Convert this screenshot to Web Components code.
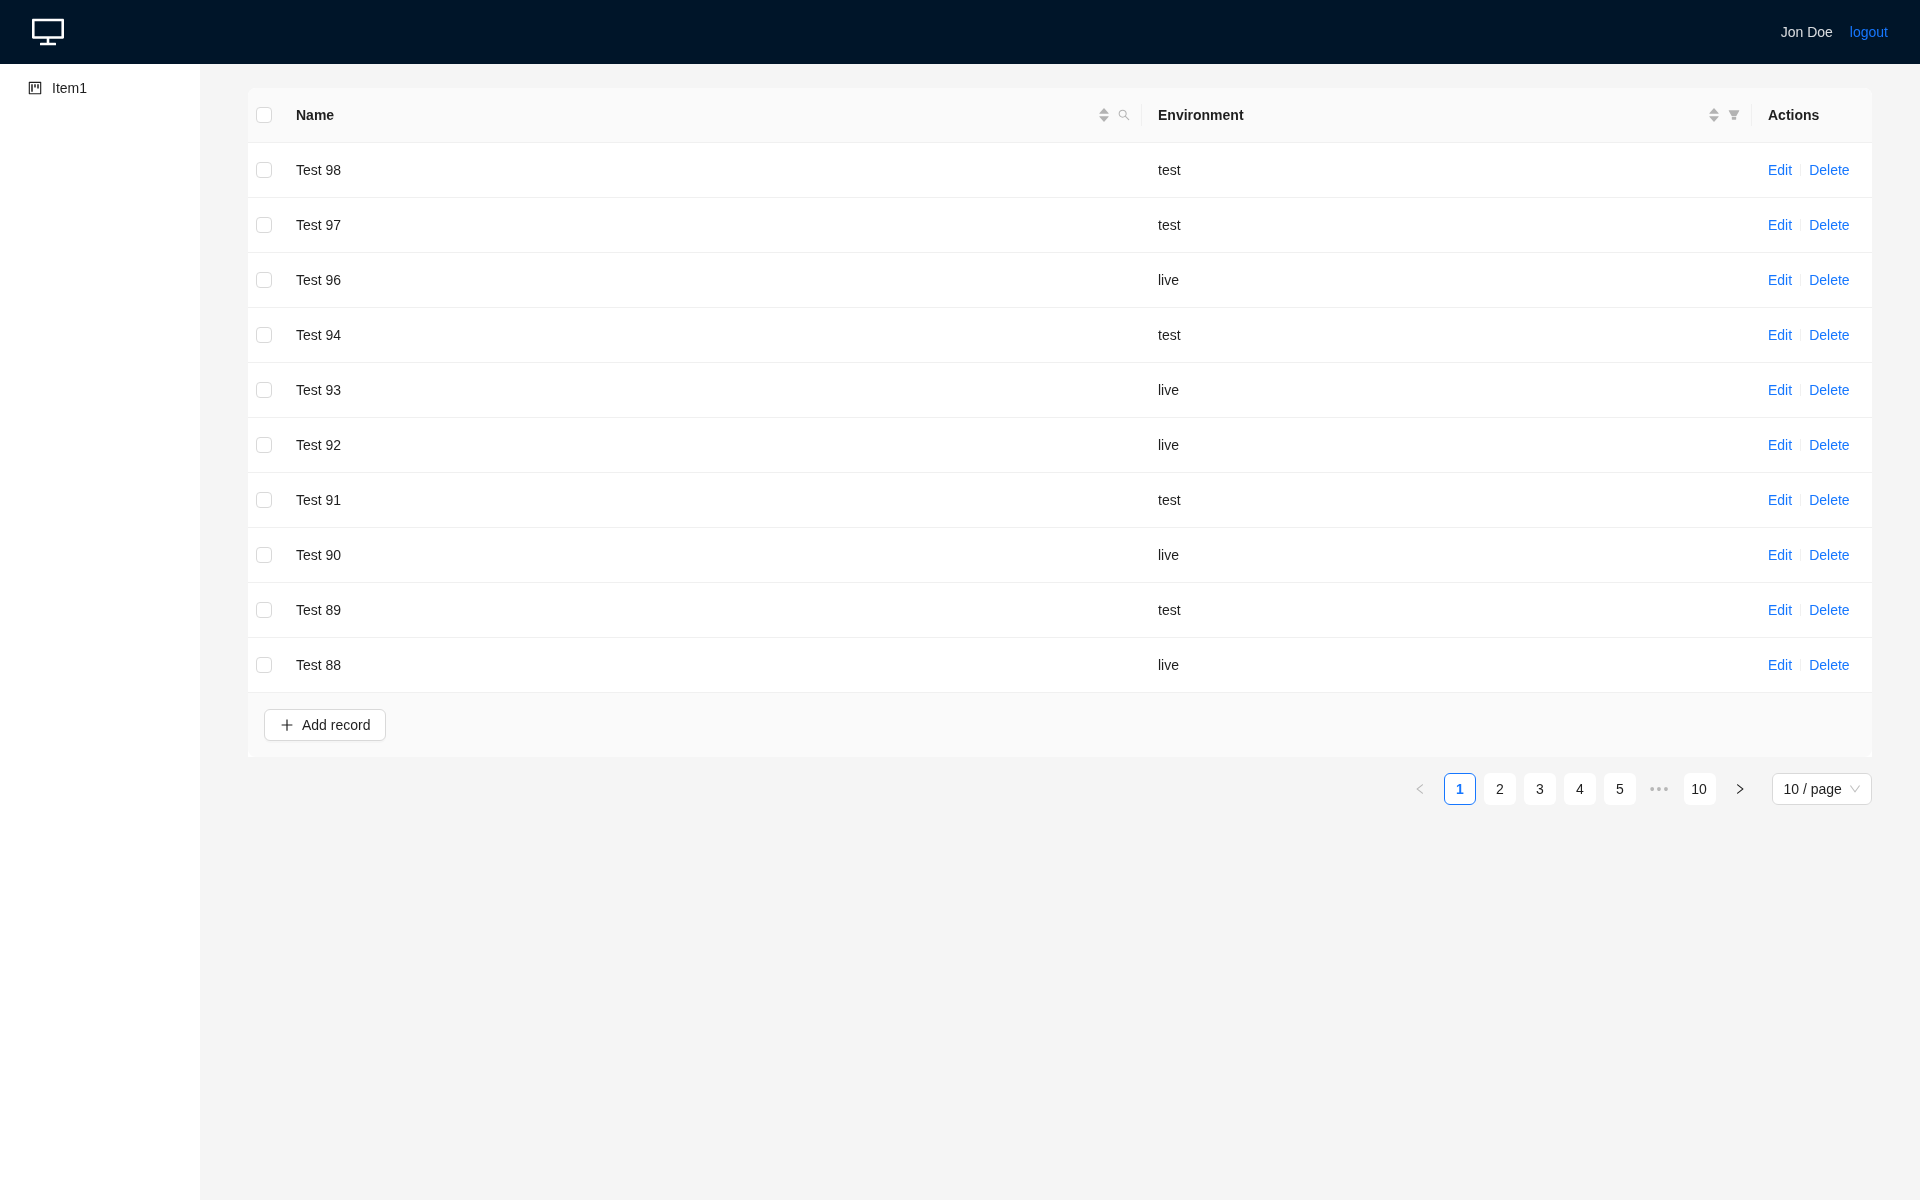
<!DOCTYPE html>
<html lang="en">
<head>
<meta charset="utf-8">
<title>Items</title>
<style>
  html, body { margin: 0; height: 100%; }
  body {
    font: 14px/22px "Liberation Sans", Arial, sans-serif;
    color: rgba(0,0,0,.88);
    background: #f5f5f5;
    --cols: 32px 862px 610px 120px;
    --link: #1677ff;
    --line: #f0f0f0;
  }
</style>
</head>
<body>
<app-shell>
  <app-header slot="header" user="Jon Doe"></app-header>
  <app-sider slot="sider"><side-item label="Item1"></side-item></app-sider>
  <data-table>
    <table-head></table-head>
    <table-row name="Test 98" env="test"></table-row>
    <table-row name="Test 97" env="test"></table-row>
    <table-row name="Test 96" env="live"></table-row>
    <table-row name="Test 94" env="test"></table-row>
    <table-row name="Test 93" env="live"></table-row>
    <table-row name="Test 92" env="live"></table-row>
    <table-row name="Test 91" env="test"></table-row>
    <table-row name="Test 90" env="live"></table-row>
    <table-row name="Test 89" env="test"></table-row>
    <table-row name="Test 88" env="live"></table-row>
    <add-button slot="footer">Add record</add-button>
  </data-table>
  <page-bar></page-bar>
</app-shell>

<script>
const ICONS = {
  desktop: 'M928 140H96c-17.7 0-32 14.3-32 32v496c0 17.7 14.3 32 32 32h380v112H304c-8.8 0-16 7.2-16 16v48c0 4.4 3.6 8 8 8h432c4.4 0 8-3.6 8-8v-48c0-8.8-7.2-16-16-16H548V700h380c17.7 0 32-14.3 32-32V172c0-17.7-14.3-32-32-32zm-40 488H136V212h752v416z',
  project: 'M280 752h80c4.4 0 8-3.6 8-8V280c0-4.4-3.6-8-8-8h-80c-4.4 0-8 3.6-8 8v464c0 4.4 3.6 8 8 8zm192-280h80c4.4 0 8-3.6 8-8V280c0-4.4-3.6-8-8-8h-80c-4.4 0-8 3.6-8 8v184c0 4.4 3.6 8 8 8zm192 72h80c4.4 0 8-3.6 8-8V280c0-4.4-3.6-8-8-8h-80c-4.4 0-8 3.6-8 8v256c0 4.4 3.6 8 8 8zm216-432H144c-17.7 0-32 14.3-32 32v736c0 17.7 14.3 32 32 32h736c17.7 0 32-14.3 32-32V144c0-17.7-14.3-32-32-32zm-40 728H184V184h656v656z',
  search: 'M909.6 854.5L649.9 594.8C690.2 542.7 712 479 712 412c0-80.2-31.3-155.4-87.9-212.1-56.6-56.7-132-87.9-212.1-87.9s-155.5 31.3-212.1 87.9C143.2 256.5 112 331.8 112 412c0 80.1 31.3 155.5 87.9 212.1C256.5 680.8 331.8 712 412 712c67 0 130.6-21.8 182.7-62l259.7 259.6a8.2 8.2 0 0 0 11.6 0l43.6-43.5a8.2 8.2 0 0 0 0-11.6zM570.4 570.4C528 612.7 471.8 636 412 636s-116-23.3-158.4-65.6C211.3 528 188 471.8 188 412s23.3-116.1 65.6-158.4C296 211.3 352.2 188 412 188s116.1 23.2 158.4 65.6S636 352.2 636 412s-23.3 116.1-65.6 158.4z',
  filter: 'M349 838c0 17.7 14.2 32 31.8 32h262.4c17.6 0 31.8-14.3 31.8-32V642H349v196zm531.1-684H143.9c-24.5 0-39.8 26.7-27.5 48l221.3 376h348.8l221.3-376c12.1-21.3-3.2-48-27.7-48z',
  up: 'M858.9 689L530.5 308.2c-9.4-10.9-27.5-10.9-37 0L165.1 689c-12.2 14.2-1.2 35 18.5 35h656.8c19.7 0 30.7-20.8 18.5-35z',
  down: 'M840.4 300H183.6c-19.7 0-30.7 20.8-18.5 35l328.4 380.8c9.4 10.9 27.5 10.9 37 0L858.9 335c12.2-14.2 1.2-35-18.5-35z',
  left: 'M724 218.3V141c0-6.7-7.7-10.4-12.9-6.3L260.3 486.8a31.86 31.86 0 0 0 0 50.3l450.8 352.1c5.3 4.1 12.9.4 12.9-6.3v-77.3c0-4.9-2.3-9.6-6.1-12.6l-360-281 360-281.1c3.8-3 6.1-7.7 6.1-12.6z',
  right: 'M765.7 486.8L314.9 134.7A7.97 7.97 0 0 0 302 141v77.3c0 4.9 2.3 9.6 6.1 12.6l360 281.1-360 281.1c-3.9 3-6.1 7.7-6.1 12.6V883c0 6.7 7.7 10.4 12.9 6.3l450.8-352.1a31.96 31.96 0 0 0 0-50.4z',
  chevron: 'M884 256h-75c-5.1 0-9.9 2.5-12.9 6.6L512 654.2 227.9 262.6c-3-4.1-7.8-6.6-12.9-6.6h-75c-6.5 0-10.3 7.4-6.5 12.7l352.6 486.1c12.8 17.6 39 17.6 51.7 0l352.6-486.1c3.9-5.3.1-12.7-6.4-12.7z',
  plus: 'M482 152h60q8 0 8 8v704q0 8-8 8h-60q-8 0-8-8V160q0-8 8-8zM176 474h672q8 0 8 8v60q0 8-8 8H176q-8 0-8-8v-60q0-8 8-8z'
};
const icon = (name, size) =>
  `<svg width="${size}" height="${size}" viewBox="64 64 896 896" fill="currentColor" aria-hidden="true" style="display:block;flex:none"><path d="${ICONS[name]}"/></svg>`;

class Base extends HTMLElement {
  render(html) {
    if (!this.shadowRoot) this.attachShadow({ mode: 'open' });
    this.shadowRoot.innerHTML = html;
  }
}

customElements.define('app-shell', class extends Base {
  connectedCallback() {
    this.render(`<style>
      :host { display: grid; grid-template: 64px 1fr / 200px 1fr; min-height: 1200px; will-change: transform; }
      .top { grid-column: 1 / -1; display: block; }
      main { padding: 24px 48px; display: flex; flex-direction: column; gap: 16px; min-width: 0; }
    </style>
    <slot class="top" name="header"></slot>
    <slot name="sider"></slot>
    <main><slot></slot></main>`);
  }
});

customElements.define('app-header', class extends Base {
  connectedCallback() {
    this.render(`<style>
      :host { display: flex; align-items: center; justify-content: space-between; height: 64px;
              padding: 0 32px; background: #001529; color: #fff; }
      .user { display: flex; gap: 17px; }
      .name { color: rgba(255,255,255,.85); }
      a { color: var(--link); text-decoration: none; }
    </style>
    ${icon('desktop', 32)}
    <div class="user"><span class="name">${this.getAttribute('user')}</span><a href="#">logout</a></div>`);
  }
});

customElements.define('app-sider', class extends Base {
  connectedCallback() {
    this.render(`<style>
      :host { display: block; background: #fff; padding: 4px 0; }
    </style><slot></slot>`);
  }
});

customElements.define('side-item', class extends Base {
  connectedCallback() {
    this.render(`<style>
      :host { display: flex; align-items: center; gap: 10px; height: 40px; padding-left: 28px; }
    </style>${icon('project', 14)}<span>${this.getAttribute('label')}</span>`);
  }
});

customElements.define('data-table', class extends Base {
  connectedCallback() {
    this.render(`<style>
      :host { display: block; background: #fff; border-radius: 8px 8px 0 0; overflow: hidden; }
      footer { background: #fafafa; padding: 16px; display: flex; border-radius: 0 0 8px 8px; }
    </style>
    <slot></slot>
    <footer><slot name="footer"></slot></footer>`);
  }
});

customElements.define('check-box', class extends Base {
  connectedCallback() {
    this.render(`<style>
      :host { display: block; box-sizing: border-box; width: 16px; height: 16px;
              background: #fff; border: 1px solid #d9d9d9; border-radius: 4px; }
    </style>`);
  }
});

const rowCss = `
  :host { display: grid; grid-template-columns: var(--cols); height: 55px; box-sizing: border-box;
          border-bottom: 1px solid var(--line); }
  .cell { display: flex; align-items: center; padding: 0 16px; min-width: 0; position: relative; }
  .sel { padding: 0 0 0 8px; }
`;

customElements.define('table-head', class extends Base {
  connectedCallback() {
    const sorter = `<span class="sorter">${icon('up', 12)}${icon('down', 12)}</span>`;
    this.render(`<style>${rowCss}
      :host { background: #fafafa; font-weight: 600; }
      .cell.sep::after { content: ""; position: absolute; right: 0; top: 16px; width: 1px; height: 22px; background: var(--line); }
      .title { flex: 1; }
      .sorter { display: flex; flex-direction: column; color: #b3b3b3; }
      .sorter svg + svg { margin-top: -4.5px; }
      .trig { display: flex; color: #b3b3b3; margin: 0 12px 0 8.5px; }
      .cell.tools { padding-right: 0; }
    </style>
    <div class="cell sel"><check-box></check-box></div>
    <div class="cell tools sep"><span class="title">Name</span>${sorter}<span class="trig">${icon('search', 12)}</span></div>
    <div class="cell tools sep"><span class="title">Environment</span>${sorter}<span class="trig">${icon('filter', 12)}</span></div>
    <div class="cell">Actions</div>`);
  }
});

customElements.define('table-row', class extends Base {
  connectedCallback() {
    this.render(`<style>${rowCss}
      a { color: var(--link); text-decoration: none; }
      i { width: 1px; height: 12.6px; margin: 0 8px; background: var(--line); }
    </style>
    <div class="cell sel"><check-box></check-box></div>
    <div class="cell">${this.getAttribute('name')}</div>
    <div class="cell">${this.getAttribute('env')}</div>
    <div class="cell"><a href="#">Edit</a><i></i><a href="#">Delete</a></div>`);
  }
});

customElements.define('add-button', class extends Base {
  connectedCallback() {
    this.render(`<style>
      :host { display: inline-flex; align-items: center; gap: 8px; height: 32px; box-sizing: border-box;
              padding: 0 15px; background: #fff; border: 1px solid #d9d9d9; border-radius: 6px;
              box-shadow: 0 2px 0 rgba(0,0,0,.02); }
    </style>${icon('plus', 14)}<slot></slot>`);
  }
});

customElements.define('page-bar', class extends Base {
  connectedCallback() {
    const item = (t, c = '') => `<span class="item ${c}">${t}</span>`;
    this.render(`<style>
      :host { display: flex; justify-content: flex-end; gap: 8px; height: 32px; line-height: 30px; }
      .item { box-sizing: border-box; width: 32px; height: 32px; display: flex; align-items: center;
              justify-content: center; border-radius: 6px; border: 1px solid transparent; }
      .num { background: #fff; }
      .wide { padding-right: 2px; }
      .on { border-color: var(--link); color: var(--link); font-weight: 600; }
      .off { color: rgba(0,0,0,.25); }
      .jump { color: rgba(0,0,0,.25); letter-spacing: 2px; }
      .select { box-sizing: border-box; width: 100px; height: 32px; margin-left: 8px; padding: 0 10.5px 0 10.5px;
                display: flex; align-items: center; justify-content: space-between;
                background: #fff; border: 1px solid #d9d9d9; border-radius: 6px; }
      .select svg { color: rgba(0,0,0,.25); }
    </style>
    ${item(icon('left', 12), 'off')}
    ${item('1', 'num on')}${item('2', 'num')}${item('3', 'num')}${item('4', 'num')}${item('5', 'num')}
    ${item('•••', 'jump')}
    ${item('10', 'num wide')}
    ${item(icon('right', 12))}
    <div class="select"><span>10 / page</span>${icon('chevron', 12)}</div>`);
  }
});
</script>
</body>
</html>
